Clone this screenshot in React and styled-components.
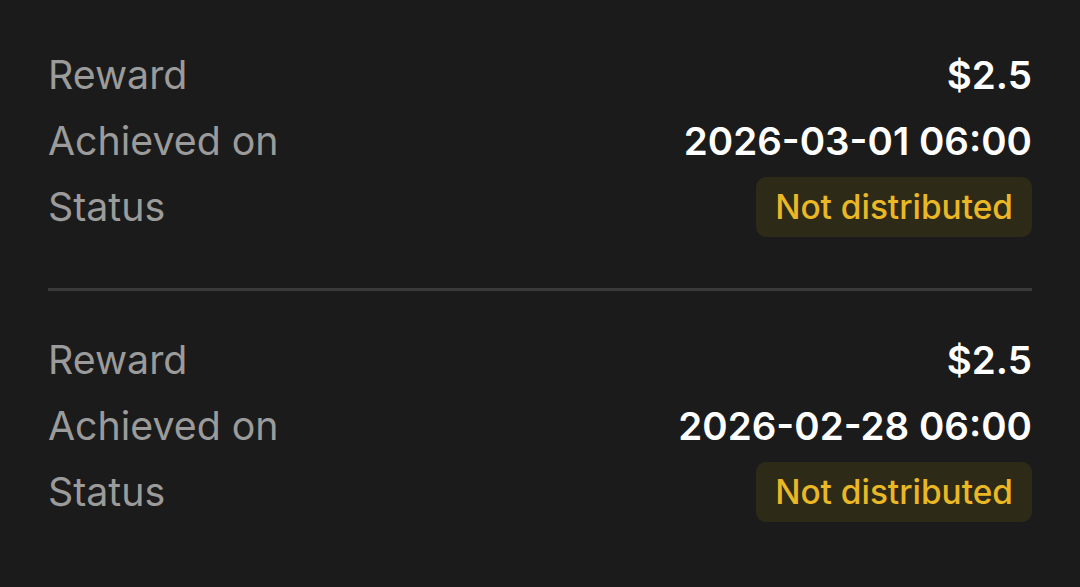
import React from "react";
import styled, { createGlobalStyle } from "styled-components";

const Global = createGlobalStyle`
  html, body { margin: 0; padding: 0; background: #1b1b1b; }
  body { font-family: Inter, "Noto Sans", sans-serif; }
`;

const Page = styled.div`
  width: 1080px;
  min-height: 587px;
  box-sizing: border-box;
  background: #1b1b1b;
  padding: 6px 48px 0;
`;

const Item = styled.section`
  padding: 36px 0 48px;
  border-bottom: ${(p) => (p.$divider ? "3px solid #3a3a3a" : "none")};
`;

const Row = styled.div`
  display: flex;
  align-items: center;
  justify-content: space-between;
  height: 66px;
`;

const Label = styled.span`
  font-size: 39.3px;
  line-height: 1;
  color: #9b9b9b;
  font-weight: 400;
`;

const Value = styled.span`
  font-size: 38.5px;
  line-height: 1;
  color: #ffffff;
  font-weight: 600;
`;

const Badge = styled.span`
  display: inline-flex;
  align-items: center;
  height: 60px;
  padding: 0 19px;
  box-sizing: border-box;
  border-radius: 10px;
  background: #2e2a18;
  color: #e9b824;
  font-size: 33.4px;
  font-weight: 500;
`;

const records = [
  { reward: "$2.5", date: "2026-03-01 06:00", status: "Not distributed" },
  { reward: "$2.5", date: "2026-02-28 06:00", status: "Not distributed" },
];

export default function App() {
  return (
    <>
      <Global />
      <Page>
        {records.map((r, i) => (
          <Item key={i} $divider={i < records.length - 1}>
            <Row>
              <Label>Reward</Label>
              <Value>{r.reward}</Value>
            </Row>
            <Row>
              <Label>Achieved on</Label>
              <Value>{r.date}</Value>
            </Row>
            <Row>
              <Label>Status</Label>
              <Badge>{r.status}</Badge>
            </Row>
          </Item>
        ))}
      </Page>
    </>
  );
}
